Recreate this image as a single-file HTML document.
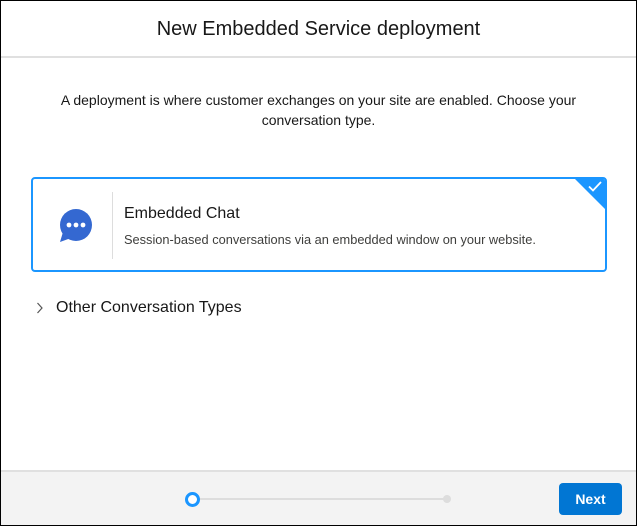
<!DOCTYPE html>
<html><head><style>
body{margin:0;width:637px;height:526px;overflow:hidden;font-family:"Liberation Sans",sans-serif;color:#181818;background:#fff}
.frame{position:absolute;left:0;top:0;width:635px;height:524px;border:1px solid #000;background:#fff;overflow:hidden}
.hdr{position:absolute;left:0;top:0;width:635px;height:55px;border-bottom:2px solid #e0e0e0;text-align:center;line-height:56px;font-size:20px}
.intro{position:absolute;left:40px;width:555px;top:89px;text-align:center;font-size:14px;line-height:20px;color:#181818}
.card{position:absolute;left:30px;top:176px;width:572px;height:91px;border:2px solid #1b96ff;border-radius:4px;overflow:hidden}
.tri{position:absolute;right:0;top:0;width:0;height:0;border-top:30px solid #1b96ff;border-left:30px solid transparent}
.div{position:absolute;left:79px;top:13px;width:1px;height:67px;background:#ddd}
.t1{position:absolute;left:91px;top:26px;font-size:16px}
.t2{position:absolute;left:91px;top:53px;font-size:12.8px;color:#3e3e3c}
.other{position:absolute;left:55px;top:298px;font-size:16px}
.ftr{position:absolute;left:0;top:469px;width:635px;height:55px;background:#f3f3f3;border-top:2px solid #e0e0e0}
.btn{position:absolute;left:558px;top:482px;width:63px;height:32px;background:#0176d3;border-radius:4px;color:#fff;font-size:14px;text-align:center;line-height:32px;font-weight:bold}
</style></head><body>
<div class="frame">
<div class="hdr">New Embedded Service deployment</div>
<div class="intro">A deployment is where customer exchanges on your site are enabled. Choose your conversation type.</div>
<div class="card">
<div class="tri"></div>
<svg style="position:absolute;right:2px;top:1px" width="16" height="13" viewBox="0 0 16 13"><path d="M2 6.5 L6 10.5 L14 2" stroke="#fff" stroke-width="1.8" fill="none"/></svg>
<svg style="position:absolute;left:25px;top:30px" width="36" height="36" viewBox="0 0 36 36"><circle cx="18" cy="16" r="16" fill="#3468d1"/><path d="M5 23 L2 33 L13 29 Z" fill="#3468d1"/><circle cx="11" cy="16" r="2.4" fill="#fff"/><circle cx="18" cy="16" r="2.4" fill="#fff"/><circle cx="25" cy="16" r="2.4" fill="#fff"/></svg>
<div class="div"></div>
<div class="t1">Embedded Chat</div>
<div class="t2">Session-based conversations via an embedded window on your website.</div>
</div>
<svg style="position:absolute;left:34px;top:300px" width="10" height="14" viewBox="0 0 10 14"><path d="M2.5 2 L7 7 L2.5 12" stroke="#555" stroke-width="1.2" fill="none"/></svg>
<div class="other">Other Conversation Types</div>
<div class="ftr"></div>
<div style="position:absolute;left:197px;top:497px;width:246px;height:2px;background:#ddd"></div>
<div style="position:absolute;left:184px;top:491px;width:9px;height:9px;border:3px solid #1b96ff;border-radius:50%;background:#fff"></div>
<div style="position:absolute;left:442px;top:494px;width:8px;height:8px;border-radius:50%;background:#ddd"></div>
<div class="btn">Next</div>
</div>
</body></html>
